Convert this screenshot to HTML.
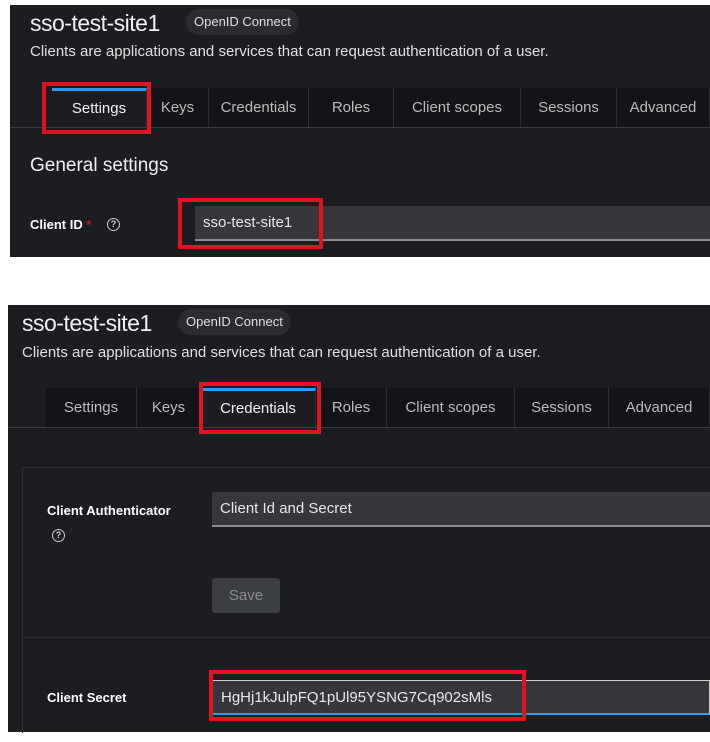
<!DOCTYPE html>
<html><head><style>
body{margin:0;width:710px;height:742px;background:#fff;position:relative;overflow:hidden;font-family:"Liberation Sans",sans-serif;}
.p{position:absolute;background:#1b1d21;color:#e0e0e0;}
.a{position:absolute;}
.t{font-size:23px;color:#f0f0f0;letter-spacing:-0.5px;}
.b{background:#2a2c30;border-radius:14px;font-size:13px;color:#e0e0e0;padding:0 8px;height:26px;line-height:26px;}
.s{font-size:15px;color:#e0e0e0;}
.tab{position:absolute;height:39px;line-height:39px;text-align:center;background:#131417;color:#bbb;font-size:15px;border-right:1px solid #2c2e33;box-sizing:border-box;}
.act{background:#1b1d21;color:#f0f0f0;border-top:3px solid #2b9af3;line-height:35px;}
.red{position:absolute;border:4px solid #e0141e;box-sizing:border-box;}
.inp{position:absolute;background:#36373b;border-bottom:2px solid #8a8d90;box-sizing:border-box;font-size:15px;color:#e8e8e8;padding-left:8px;line-height:33px;}
.lbl{position:absolute;font-size:13px;font-weight:bold;color:#fff;}
.q{position:absolute;width:11px;height:11px;border:1.5px solid #ccc;border-radius:50%;font-size:9px;line-height:11px;text-align:center;color:#ccc;font-weight:bold;}
</style></head><body>
<div class="p" style="left:10px;top:5px;width:700px;height:252px;">
 <div class="a t" style="left:20px;top:5px;">sso-test-site1</div>
 <div class="a b" style="left:176px;top:4px;">OpenID Connect</div>
 <div class="a s" style="left:20px;top:38px;">Clients are applications and services that can request authentication of a user.</div>
 <div class="a" style="left:0;top:83px;width:700px;height:39px;border-bottom:1px solid #3a3c40;"></div>
 <div class="tab act" style="left:42px;top:83px;width:95px;">Settings</div>
 <div class="tab" style="left:137px;top:83px;width:62px;">Keys</div>
 <div class="tab" style="left:199px;top:83px;width:100px;">Credentials</div>
 <div class="tab" style="left:299px;top:83px;width:85px;">Roles</div>
 <div class="tab" style="left:384px;top:83px;width:127px;">Client scopes</div>
 <div class="tab" style="left:511px;top:83px;width:96px;">Sessions</div>
 <div class="tab" style="left:607px;top:83px;width:93px;">Advanced</div>
 <div class="a" style="left:20px;top:150px;font-size:19px;color:#f0f0f0;">General settings</div>
 <div class="lbl" style="left:20px;top:212px;">Client ID <span style="color:#c9190b">*</span></div>
 <div class="q" style="left:97px;top:213px;">?</div>
 <div class="inp" style="left:185px;top:201px;width:515px;height:35px;">sso-test-site1</div>
</div>
<div class="red" style="left:42px;top:82px;width:109px;height:52px;"></div>
<div class="red" style="left:178px;top:198px;width:145px;height:51px;"></div>

<div class="p" style="left:8px;top:305px;width:702px;height:427px;">
 <div class="a t" style="left:14px;top:5px;">sso-test-site1</div>
 <div class="a b" style="left:170px;top:4px;">OpenID Connect</div>
 <div class="a s" style="left:14px;top:39px;">Clients are applications and services that can request authentication of a user.</div>
 <div class="a" style="left:0;top:83px;width:702px;height:39px;border-bottom:1px solid #3a3c40;"></div>
 <div class="tab" style="left:38px;top:83px;width:91px;">Settings</div>
 <div class="tab" style="left:129px;top:83px;width:64px;">Keys</div>
 <div class="tab act" style="left:193px;top:83px;width:115px;">Credentials</div>
 <div class="tab" style="left:308px;top:83px;width:71px;">Roles</div>
 <div class="tab" style="left:379px;top:83px;width:128px;">Client scopes</div>
 <div class="tab" style="left:507px;top:83px;width:94px;">Sessions</div>
 <div class="tab" style="left:601px;top:83px;width:101px;">Advanced</div>
 <div class="a" style="left:14px;top:162px;width:688px;height:265px;border-top:1px solid #2e3034;border-left:1px solid #2e3034;"></div>
 <div class="a" style="left:14px;top:332px;width:688px;border-top:1px solid #2e3034;"></div>
 <div class="lbl" style="left:39px;top:198px;">Client Authenticator</div>
 <div class="q" style="left:44px;top:224px;">?</div>
 <div class="inp" style="left:204px;top:187px;width:498px;height:35px;">Client Id and Secret</div>
 <div class="a" style="left:204px;top:273px;width:68px;height:35px;background:#3c3f42;border-radius:3px;color:#8a8d90;font-size:15px;line-height:35px;text-align:center;">Save</div>
 <div class="lbl" style="left:39px;top:385px;">Client Secret</div>
 <div class="inp" style="left:204px;top:375px;width:498px;height:35px;border:1px solid #d0d0d0;border-bottom:2px solid #2b9af3;">HgHj1kJulpFQ1pUl95YSNG7Cq902sMls</div>
</div>
<div class="red" style="left:199px;top:382px;width:122px;height:52px;"></div>
<div class="red" style="left:209px;top:670px;width:317px;height:51px;"></div>
</body></html>
